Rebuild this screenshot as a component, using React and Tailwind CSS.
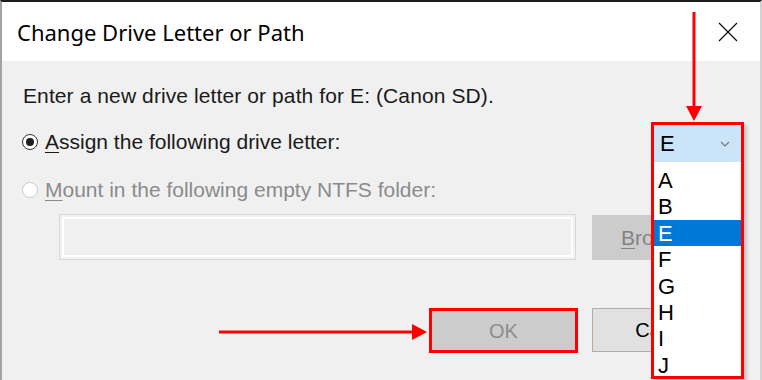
const Radio = ({ checked, disabled }) => (
  <span
    className={`flex items-center justify-center w-[16px] h-[16px] rounded-full border shrink-0 ${
      disabled ? "border-[#cccccc] bg-white" : "border-[#333333] bg-white"
    }`}
  >
    {checked && <span className="w-[8px] h-[8px] rounded-full bg-[#1f1f1f]" />}
  </span>
);

const letters = ["A", "B", "E", "F", "G", "H", "I", "J"];

export default function App() {
  return (
    <div
      className="relative w-[762px] h-[380px] overflow-hidden flex flex-col border-t-2 border-t-[#1c1c1c] border-l-2 border-l-[#a3a3a3] border-r-2 border-r-[#d2d2d2] bg-[#f0f0f0]"
      style={{ fontFamily: '"Liberation Sans", Arial, sans-serif' }}
    >
      {/* title bar */}
      <div className="h-[59px] bg-white flex items-center justify-between pl-[15px] pr-[22px] shrink-0">
        <span
          className="text-[22px] text-black leading-none"
          style={{ fontFamily: '"Noto Sans", "Open Sans", sans-serif' }}
        >
          Change Drive Letter or Path
        </span>
        <svg width="20" height="20" viewBox="0 0 20 20" className="mt-[1px]">
          <path d="M1 1L19 19M19 1L1 19" stroke="#111" strokeWidth="1.3" />
        </svg>
      </div>

      {/* body */}
      <div className="flex-1 flex flex-col pl-[20px] pr-[19px] pt-[23px] text-[21px] leading-[24px] text-[#1a1a1a]">
        <p className="ml-[1px] tracking-[0.1px]">Enter a new drive letter or path for E: (Canon SD).</p>

        <div className="mt-[22px] flex items-center gap-[7px]">
          <Radio checked />
          <span>
            <span className="underline underline-offset-[3px] decoration-1">A</span>ssign the following drive letter:
          </span>
        </div>

        <div className="mt-[24px] flex items-center gap-[7px] text-[#8b8b8b]">
          <Radio disabled />
          <span>
            <span className="underline underline-offset-[3px] decoration-1">M</span>ount in the following empty NTFS folder:
          </span>
        </div>

        <div className="mt-[12px] ml-[37px] flex gap-[16px]">
          <div className="flex-1 h-[46px] border border-[#d9d9d9] p-[2px]">
            <div className="w-full h-full border-2 border-white bg-[#f0f0f0]" />
          </div>
          <div className="w-[149px] h-[45px] mt-[1px] bg-[#cccccc] flex items-center pl-[29px] text-[#838383]">
            <span>
              <span className="underline underline-offset-[3px] decoration-1">B</span>rowse...
            </span>
          </div>
        </div>

        <div className="mt-[48px] flex justify-end gap-[14px]">
          <div className="w-[149px] h-[45px] border-[3px] border-[#ff0000] bg-[#cccccc] flex items-center justify-center text-[#8c8c8c] text-[20px]">
            OK
          </div>
          <div className="w-[149px] h-[44px] border border-[#adadad] bg-[#e1e1e1] flex items-center justify-center text-black text-[20px]">
            Cancel
          </div>
        </div>
      </div>

      {/* open drop-down list */}
      <div className="absolute left-[649px] top-[120px] w-[93px] h-[257px] border-[3px] border-[#ff0000] bg-white flex flex-col shadow-[3px_3px_3px_rgba(0,0,0,0.18)]">
        <div className="h-[37px] bg-[#cce4f7] flex items-center justify-between pl-[6px] pr-[11px] text-[22px] text-black shrink-0">
          <span>E</span>
          <svg width="10" height="6" viewBox="0 0 10 6">
            <path d="M1 1L5 5L9 1" fill="none" stroke="#7a7a7a" strokeWidth="1.2" />
          </svg>
        </div>
        <div className="pt-[5px] flex flex-col">
          {letters.map((l) => (
            <div
              key={l}
              className={`h-[26.4px] leading-[28px] pl-[4px] text-[22px] ${
                l === "E" ? "bg-[#0078d7] text-white" : "text-black"
              }`}
            >
              {l}
            </div>
          ))}
        </div>
      </div>

      {/* annotation arrows */}
      <svg className="absolute left-0 top-0 pointer-events-none" width="762" height="380">
        <line x1="692" y1="10" x2="692" y2="106" stroke="#ff0000" strokeWidth="3" />
        <polygon points="684,104 700,104 692,119" fill="#ff0000" />
        <line x1="217" y1="330" x2="414" y2="330" stroke="#ff0000" strokeWidth="3" />
        <polygon points="410,322 410,338 425,330" fill="#ff0000" />
      </svg>
    </div>
  );
}
